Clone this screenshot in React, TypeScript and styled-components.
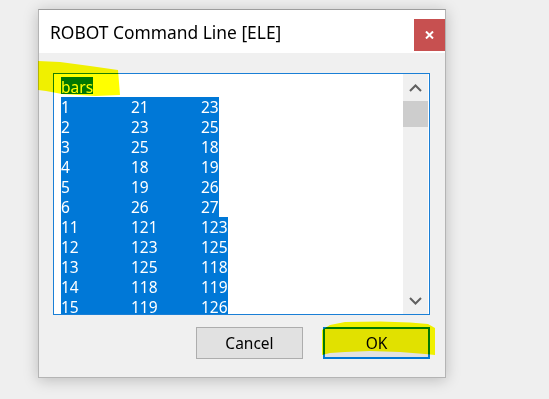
import React from "react";
import styled, { createGlobalStyle } from "styled-components";

const Global = createGlobalStyle`
  html, body { margin: 0; padding: 0; background: #f0f0f0; }
  #root { width: 549px; height: 399px; }
`;

const Page = styled.div`
  position: relative;
  width: 549px;
  height: 399px;
  box-sizing: border-box;
  padding: 9px 0 0 38px;
  background: #efefef;
  overflow: hidden;
  font-family: "Noto Sans", "Open Sans", sans-serif;
`;

const Dialog = styled.div`
  width: 408px;
  height: 369px;
  box-sizing: border-box;
  border: 1px solid #b4b4b4;
  border-top-color: #9c9c9c;
  background: #f0f0f0;
  box-shadow: 0 2px 14px rgba(0, 0, 0, 0.22);
  display: flex;
  flex-direction: column;
`;

const TitleBar = styled.div`
  height: 43px;
  flex: none;
  background: #ffffff;
  display: flex;
  align-items: flex-start;
  justify-content: space-between;
`;

const Title = styled.div`
  padding: 12px 0 0 11px;
  font-size: 17.4px;
  line-height: 20px;
  color: #000;
`;

const CloseButton = styled.div`
  margin-top: 9px;
  width: 31px;
  height: 32px;
  background: #c75050;
  display: flex;
  align-items: center;
  justify-content: center;
`;

const Body = styled.div`
  flex: 1;
  padding: 20px 15px 0 14px;
  display: flex;
  flex-direction: column;
`;

const TextBox = styled.div`
  height: 242px;
  box-sizing: border-box;
  border: 1px solid #1a7fd6;
  background: #fff;
  display: flex;
`;

const TextArea = styled.div`
  flex: 1;
  padding: 3px 0 0 7px;
  overflow: hidden;
  font-size: 15.5px;
  color: #000;
`;

const Line = styled.div`
  height: 20px;
  line-height: 20px;
  white-space: nowrap;
`;

const Sel = styled.span<{ $short?: boolean }>`
  display: inline-flex;
  vertical-align: top;
  height: ${(p) => (p.$short ? 17 : 20)}px;
  line-height: 20px;
  background: #0078d7;
  color: #fff;
`;

const Cell = styled.span<{ $w?: number }>`
  display: inline-block;
  width: ${(p) => (p.$w ? `${p.$w}px` : "auto")};
`;

const ScrollBar = styled.div`
  width: 25px;
  margin-right: 1px;
  background: #f0f0f0;
  display: flex;
  flex-direction: column;
`;

const ArrowButton = styled.div`
  height: 27px;
  flex: none;
  display: flex;
  align-items: center;
  justify-content: center;
`;

const Thumb = styled.div`
  height: 26px;
  flex: none;
  background: #cdcdcd;
`;

const Track = styled.div`
  flex: 1;
`;

const ButtonRow = styled.div`
  margin-top: 12px;
  display: flex;
  justify-content: flex-end;
  gap: 20px;
`;

const Button = styled.div<{ $default?: boolean }>`
  width: 107px;
  height: 32px;
  box-sizing: border-box;
  border: ${(p) => (p.$default ? "2px solid #0078d7" : "1px solid #adadad")};
  background: #e1e1e1;
  display: flex;
  align-items: center;
  justify-content: center;
  font-size: 15.5px;
  color: #000;
  padding-bottom: 1px;
`;

const Marker = styled.svg`
  position: absolute;
  left: 0;
  top: 0;
  width: 549px;
  height: 399px;
  mix-blend-mode: multiply;
  pointer-events: none;
`;

const rows: [string, string, string][] = [
  ["1", "21", "23"],
  ["2", "23", "25"],
  ["3", "25", "18"],
  ["4", "18", "19"],
  ["5", "19", "26"],
  ["6", "26", "27"],
  ["11", "121", "123"],
  ["12", "123", "125"],
  ["13", "125", "118"],
  ["14", "118", "119"],
  ["15", "119", "126"],
];

const Chevron = ({ up }: { up?: boolean }) => (
  <svg width="13" height="8" viewBox="0 0 13 8">
    <polyline
      points={up ? "1,7 6.5,1.5 12,7" : "1,1 6.5,6.5 12,1"}
      fill="none"
      stroke="#606060"
      strokeWidth="2"
    />
  </svg>
);

export default function App() {
  return (
    <Page>
      <Global />
      <Dialog>
        <TitleBar>
          <Title>ROBOT Command Line [ELE]</Title>
          <CloseButton>
            <svg width="9" height="8" viewBox="0 0 9 8">
              <path d="M1 0.5 L8 7.5 M8 0.5 L1 7.5" stroke="#fff" strokeWidth="2" />
            </svg>
          </CloseButton>
        </TitleBar>
        <Body>
          <TextBox>
            <TextArea>
              <Line>
                <Sel $short>bars</Sel>
              </Line>
              {rows.map((r) => (
                <Line key={r[0]}>
                  <Sel>
                    <Cell $w={70}>{r[0]}</Cell>
                    <Cell $w={70}>{r[1]}</Cell>
                    <Cell>{r[2]}</Cell>
                  </Sel>
                </Line>
              ))}
            </TextArea>
            <ScrollBar>
              <ArrowButton>
                <Chevron up />
              </ArrowButton>
              <Thumb />
              <Track />
              <ArrowButton>
                <Chevron />
              </ArrowButton>
            </ScrollBar>
          </TextBox>
          <ButtonRow>
            <Button>Cancel</Button>
            <Button $default>OK</Button>
          </ButtonRow>
        </Body>
      </Dialog>
      <Marker viewBox="0 0 549 399">
        <path
          d="M38 61 L60 62 L90 66 L118 70 L120 95 L95 96 L62 94 L46 91 L38 90 Z"
          fill="#ffff00"
        />
        <path
          d="M322 330 L330 325 L345 322 L380 321.5 L410 322.5 L428 324 L435 328 L435 355 L425 354 L400 352 L370 351 L345 352 L330 353 L322 355 Z"
          fill="#ffff00"
        />
      </Marker>
    </Page>
  );
}
